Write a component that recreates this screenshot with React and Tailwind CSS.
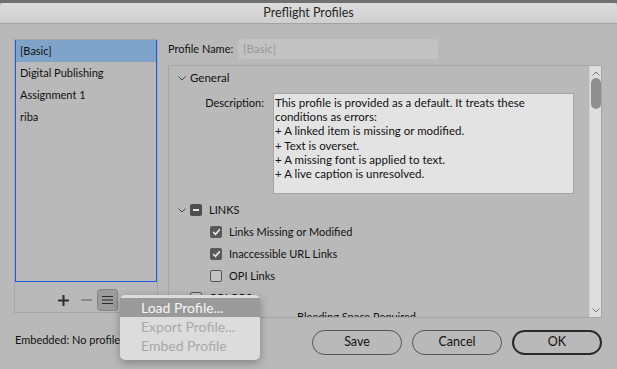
import React from 'react';

const Chevron = ({ up = false, color = '#444' }) => (
    <svg width="8" height="5" viewBox="0 0 8 5" className="shrink-0">
        <path d={up ? 'M0.5 4.5 L4 1 L7.5 4.5' : 'M0.5 0.5 L4 4 L7.5 0.5'} fill="none" stroke={color} strokeWidth="1" />
    </svg>
);

const CheckBox = ({ checked }) =>
    checked ? (
        <div className="w-[12px] h-[12px] rounded-[2px] bg-[#595959] flex items-center justify-center shrink-0">
            <svg width="9" height="8" viewBox="0 0 9 8">
                <path d="M1.2 4.2 L3.5 6.3 L7.8 1.4" fill="none" stroke="#e8e8e8" strokeWidth="1.6" />
            </svg>
        </div>
    ) : (
        <div className="w-[12px] h-[12px] rounded-[2px] border border-[#555] bg-[#c2c2c2] shrink-0"></div>
    );

const checks = [
    { label: 'Links Missing or Modified', checked: true },
    { label: 'Inaccessible URL Links', checked: true },
    { label: 'OPI Links', checked: false },
];

const profiles = ['[Basic]', 'Digital Publishing', 'Assignment 1', 'riba'];

const description = [
    'This profile is provided as a default. It treats these',
    'conditions as errors:',
    '+ A linked item is missing or modified.',
    '+ Text is overset.',
    '+ A missing font is applied to text.',
    '+ A live caption is unresolved.',
];

export default function App() {
    return (
        <div className="relative w-[617px] h-[369px] overflow-hidden bg-[#b9b9b9] font-['Lato',sans-serif] text-[11px] text-[#111]">
            {/* window behind */}
            <div className="h-[3px] bg-[#707070]"></div>

            {/* title bar */}
            <div className="h-[21px] bg-linear-to-b from-[#dcdcdc] to-[#cfcfcf] border-b border-[#a3a3a3] rounded-t-[4px] flex items-center justify-center text-[12.5px] text-[#262626]">
                Preflight Profiles
            </div>

            <div className="flex pl-[14px] pt-[15px]">
                {/* profile list */}
                <div className="w-[144px] h-[274px] border border-[#a6a6a6] flex flex-col">
                    <div className="h-[242px] border border-[#1c5fe6]">
                        {profiles.map((name, i) => (
                            <div
                                key={name}
                                className={`h-[22px] flex items-center pl-[4px] ${i === 0 ? 'bg-[#7fa3c9] -mt-[1px]' : ''}`}
                            >
                                {name}
                            </div>
                        ))}
                    </div>
                    <div className="flex-1 flex items-end pb-[1px] pl-[42px]">
                        <div className="w-[12px] h-[22px] flex items-center justify-center">
                            <svg width="11" height="11" viewBox="0 0 11 11">
                                <path d="M5.5 0 V11 M0 5.5 H11" stroke="#2e2e2e" strokeWidth="2" />
                            </svg>
                        </div>
                        <div className="ml-[11px] w-[12px] h-[22px] flex items-center justify-center">
                            <svg width="11" height="2" viewBox="0 0 11 2">
                                <path d="M0 1 H11" stroke="#8a8a8a" strokeWidth="2" />
                            </svg>
                        </div>
                        <div className="ml-[5px] w-[21px] h-[22px] rounded-[3px] border border-[#858585] bg-[#9b9b9b] flex items-center justify-center">
                            <svg width="11" height="8" viewBox="0 0 11 8">
                                <path d="M0 0.5 H11 M0 4 H11 M0 7.5 H11" stroke="#2a2a2a" strokeWidth="1" />
                            </svg>
                        </div>
                    </div>
                </div>

                {/* right column */}
                <div className="ml-[10px] w-[434px]">
                    <div className="h-[20px] flex items-center">
                        <div className="w-[70px]">Profile Name:</div>
                        <div className="w-[200px] h-[20px] rounded-[3px] bg-[#c2c2c2] flex items-center pl-[5px] text-[11.5px] text-[#989898]">
                            [Basic]
                        </div>
                    </div>

                    <div className="mt-[6px] h-[253px] border border-[#a6a6a6] flex">
                        <div className="flex-1 overflow-hidden">
                            <div className="h-[24px] flex items-center pl-[9px]">
                                <Chevron />
                                <span className="ml-[4px] text-[11.5px]">General</span>
                            </div>

                            <div className="mt-[3px] flex">
                                <div className="w-[98px] text-right pr-[3px] pt-[3px] leading-[14px]">Description:</div>
                                <div className="ml-[6px] w-[301px] h-[101px] border border-[#a5a5a5] bg-[#e3e3e3] px-[1px] pt-[2px] leading-[14.2px] text-[11.5px]">
                                    {description.map((line) => (
                                        <div key={line}>{line}</div>
                                    ))}
                                </div>
                            </div>

                            <div className="mt-[5px] h-[22px] flex items-center pl-[9px]">
                                <Chevron />
                                <div className="ml-[4px] w-[12px] h-[12px] rounded-[2px] bg-[#4e4e4e] flex items-center justify-center">
                                    <div className="w-[6px] h-[2px] bg-[#e6e6e6]"></div>
                                </div>
                                <span className="ml-[7px]">LINKS</span>
                            </div>

                            {checks.map((c) => (
                                <div key={c.label} className="h-[22px] flex items-center pl-[41px]">
                                    <CheckBox checked={c.checked} />
                                    <span className="ml-[7px]">{c.label}</span>
                                </div>
                            ))}

                            <div className="h-[22px] flex items-center pl-[21px]">
                                <CheckBox checked={false} />
                                <span className="ml-[7px]">COLORS</span>
                            </div>

                            <div className="h-[18px] pt-[2px] pl-[128px] leading-[12px]">
                                Bleeding Space Required
                            </div>
                        </div>

                        {/* scrollbar */}
                        <div className="w-[12px] bg-[#dedede] border-l border-[#cfcfcf] flex flex-col items-center">
                            <div className="mt-[5px]">
                                <Chevron up color="#777" />
                            </div>
                            <div className="mt-[2px] w-[10px] h-[31px] rounded-full bg-[#8f8f8f]"></div>
                            <div className="mt-auto mb-[4px]">
                                <Chevron color="#777" />
                            </div>
                        </div>
                    </div>
                </div>
            </div>

            {/* bottom row */}
            <div className="mt-[12px] h-[25px] flex items-center pl-[15px] pr-[15px]">
                <div className="mb-[4px]">Embedded: No profile</div>
                <div className="ml-auto flex gap-[10px] text-[12.5px]">
                    <button className="w-[90px] h-[25px] rounded-full border border-[#555] flex items-center justify-center">
                        Save
                    </button>
                    <button className="w-[90px] h-[25px] rounded-full border border-[#555] flex items-center justify-center">
                        Cancel
                    </button>
                    <button className="w-[90px] h-[25px] rounded-full border-2 border-[#2b2b2b] flex items-center justify-center">
                        OK
                    </button>
                </div>
            </div>

            {/* popup menu */}
            <div className="absolute left-[120px] top-[295px] w-[140px] h-[65px] rounded-[5px] bg-[#dcdcdc] shadow-[0_3px_10px_rgba(0,0,0,0.3)] pt-[3px] text-[14px]">
                <div className="h-[19px] bg-[#9a9a9a] text-[#f6f6f6] flex items-center pl-[21px]">Load Profile...</div>
                <div className="h-[19px] text-[#a9a9a9] flex items-center pl-[21px]">Export Profile...</div>
                <div className="h-[19px] text-[#a9a9a9] flex items-center pl-[21px]">Embed Profile</div>
            </div>
        </div>
    );
}
